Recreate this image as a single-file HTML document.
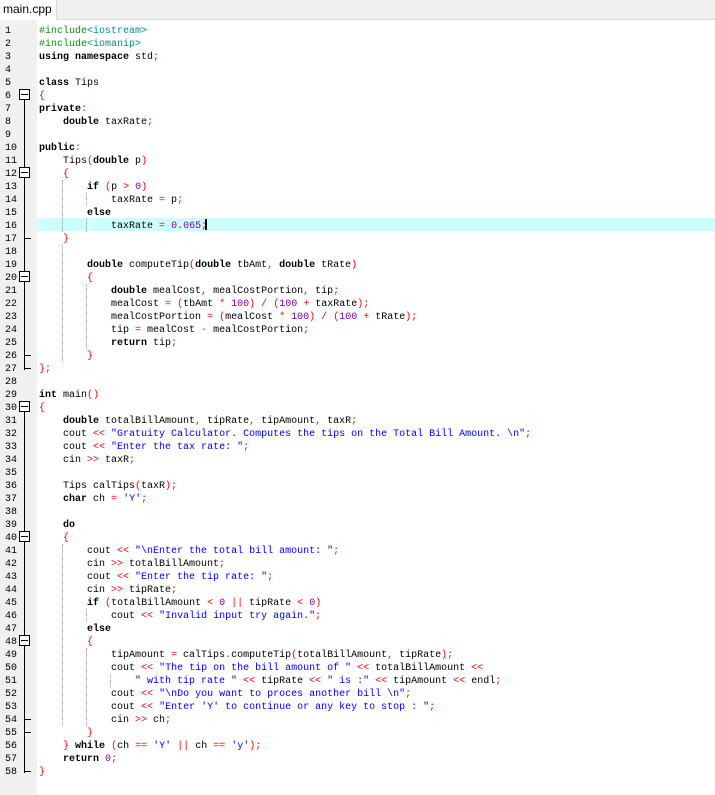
<!DOCTYPE html>
<html><head><meta charset="utf-8"><style>
body{margin:0;width:715px;height:795px;background:#fff;overflow:hidden;position:relative;font-family:"Liberation Mono",monospace;}
#bar{position:absolute;left:0;top:0;width:715px;height:19px;background:#f0f0f0;border-bottom:1px solid #dadada;}
#tab{position:absolute;left:0;top:0;width:57px;height:20px;background:#fff;border-right:1px solid #dadada;font-family:"Liberation Sans",sans-serif;font-size:12px;line-height:19px;padding-left:3px;box-sizing:border-box;color:#000;}
#gut{position:absolute;left:0;top:20px;width:37px;height:775px;background:#f0f0f0;}
#hl{position:absolute;left:37px;top:218px;width:678px;height:13px;background:#ccffff;}
#nums{position:absolute;left:5px;top:25px;font-size:10px;line-height:13px;color:#000;white-space:pre;margin:0;font-family:"Liberation Mono",monospace;}
pre#code{position:absolute;left:39px;top:25px;margin:0;font-family:"Liberation Mono",monospace;font-size:10px;line-height:13px;color:#000;}
.k{font-weight:bold}
.o{color:#f00}
.n{color:#8000a0}
.s{color:#0000ff}
.p{color:#108a10}
.q{color:#00908a}
.box{position:absolute;left:19px;width:11px;height:11px;border:1px solid #000;background:#fff;box-sizing:border-box;}
.box:after{content:"";position:absolute;left:1px;right:1px;top:4px;height:1px;background:#000;}
.vl{position:absolute;left:24px;width:1px;background:#000;}
.tk{position:absolute;left:24px;width:7px;height:1px;background:#000;}
.g{position:absolute;width:0;border-left:1px dotted #999;}
#cur{position:absolute;left:205px;top:219px;width:2px;height:11px;background:#000;}
</style></head><body>
<div id="bar"></div><div id="tab">main.cpp</div>
<div id="gut"></div>
<div id="hl"></div>
<pre id="nums">1
2
3
4
5
6
7
8
9
10
11
12
13
14
15
16
17
18
19
20
21
22
23
24
25
26
27
28
29
30
31
32
33
34
35
36
37
38
39
40
41
42
43
44
45
46
47
48
49
50
51
52
53
54
55
56
57
58</pre>
<div class="vl" style="top:95px;height:275px"></div>
<div class="tk" style="top:238px"></div>
<div class="tk" style="top:355px"></div>
<div class="tk" style="top:368px"></div>
<div class="vl" style="top:407px;height:366px"></div>
<div class="tk" style="top:719px"></div>
<div class="tk" style="top:732px"></div>
<div class="tk" style="top:771px"></div>
<div class="box" style="top:89px"></div>
<div class="box" style="top:167px"></div>
<div class="box" style="top:271px"></div>
<div class="box" style="top:401px"></div>
<div class="box" style="top:531px"></div>
<div class="box" style="top:635px"></div>
<div class="g" style="left:62px;top:180px;height:52px"></div>
<div class="g" style="left:86px;top:193px;height:13px"></div>
<div class="g" style="left:86px;top:219px;height:13px"></div>
<div class="g" style="left:62px;top:245px;height:117px"></div>
<div class="g" style="left:86px;top:284px;height:65px"></div>
<div class="g" style="left:62px;top:544px;height:182px"></div>
<div class="g" style="left:86px;top:609px;height:13px"></div>
<div class="g" style="left:86px;top:648px;height:78px"></div>
<div class="g" style="left:110px;top:674px;height:13px"></div>
<pre id="code"><span class="p">#include</span><span class="q">&lt;iostream&gt;</span>
<span class="p">#include</span><span class="q">&lt;iomanip&gt;</span>
<span class="k">using namespace</span> std<span class="o">;</span>

<span class="k">class</span> Tips
<span class="o">{</span>
<span class="k">private</span><span class="o">:</span>
    <span class="k">double</span> taxRate<span class="o">;</span>

<span class="k">public</span><span class="o">:</span>
    Tips<span class="o">(</span><span class="k">double</span> p<span class="o">)</span>
    <span class="o">{</span>
        <span class="k">if</span> <span class="o">(</span>p <span class="o">&gt;</span> <span class="n">0</span><span class="o">)</span>
            taxRate <span class="o">=</span> p<span class="o">;</span>
        <span class="k">else</span>
            taxRate <span class="o">=</span> <span class="n">0.065</span><span class="o">;</span>
    <span class="o">}</span>

        <span class="k">double</span> computeTip<span class="o">(</span><span class="k">double</span> tbAmt<span class="o">,</span> <span class="k">double</span> tRate<span class="o">)</span>
        <span class="o">{</span>
            <span class="k">double</span> mealCost<span class="o">,</span> mealCostPortion<span class="o">,</span> tip<span class="o">;</span>
            mealCost <span class="o">=</span> <span class="o">(</span>tbAmt <span class="o">*</span> <span class="n">100</span><span class="o">)</span> <span class="o">/</span> <span class="o">(</span><span class="n">100</span> <span class="o">+</span> taxRate<span class="o">);</span>
            mealCostPortion <span class="o">=</span> <span class="o">(</span>mealCost <span class="o">*</span> <span class="n">100</span><span class="o">)</span> <span class="o">/</span> <span class="o">(</span><span class="n">100</span> <span class="o">+</span> tRate<span class="o">);</span>
            tip <span class="o">=</span> mealCost <span class="o">-</span> mealCostPortion<span class="o">;</span>
            <span class="k">return</span> tip<span class="o">;</span>
        <span class="o">}</span>
<span class="o">};</span>

<span class="k">int</span> main<span class="o">()</span>
<span class="o">{</span>
    <span class="k">double</span> totalBillAmount<span class="o">,</span> tipRate<span class="o">,</span> tipAmount<span class="o">,</span> taxR<span class="o">;</span>
    cout <span class="o">&lt;&lt;</span> <span class="s">"Gratuity Calculator. Computes the tips on the Total Bill Amount. \n"</span><span class="o">;</span>
    cout <span class="o">&lt;&lt;</span> <span class="s">"Enter the tax rate: "</span><span class="o">;</span>
    cin <span class="o">&gt;&gt;</span> taxR<span class="o">;</span>

    Tips calTips<span class="o">(</span>taxR<span class="o">);</span>
    <span class="k">char</span> ch <span class="o">=</span> <span class="s">'Y'</span><span class="o">;</span>

    <span class="k">do</span>
    <span class="o">{</span>
        cout <span class="o">&lt;&lt;</span> <span class="s">"\nEnter the total bill amount: "</span><span class="o">;</span>
        cin <span class="o">&gt;&gt;</span> totalBillAmount<span class="o">;</span>
        cout <span class="o">&lt;&lt;</span> <span class="s">"Enter the tip rate: "</span><span class="o">;</span>
        cin <span class="o">&gt;&gt;</span> tipRate<span class="o">;</span>
        <span class="k">if</span> <span class="o">(</span>totalBillAmount <span class="o">&lt;</span> <span class="n">0</span> <span class="o">||</span> tipRate <span class="o">&lt;</span> <span class="n">0</span><span class="o">)</span>
            cout <span class="o">&lt;&lt;</span> <span class="s">"Invalid input try again."</span><span class="o">;</span>
        <span class="k">else</span>
        <span class="o">{</span>
            tipAmount <span class="o">=</span> calTips<span class="o">.</span>computeTip<span class="o">(</span>totalBillAmount<span class="o">,</span> tipRate<span class="o">);</span>
            cout <span class="o">&lt;&lt;</span> <span class="s">"The tip on the bill amount of "</span> <span class="o">&lt;&lt;</span> totalBillAmount <span class="o">&lt;&lt;</span>
                <span class="s">" with tip rate "</span> <span class="o">&lt;&lt;</span> tipRate <span class="o">&lt;&lt;</span> <span class="s">" is :"</span> <span class="o">&lt;&lt;</span> tipAmount <span class="o">&lt;&lt;</span> endl<span class="o">;</span>
            cout <span class="o">&lt;&lt;</span> <span class="s">"\nDo you want to proces another bill \n"</span><span class="o">;</span>
            cout <span class="o">&lt;&lt;</span> <span class="s">"Enter 'Y' to continue or any key to stop : "</span><span class="o">;</span>
            cin <span class="o">&gt;&gt;</span> ch<span class="o">;</span>
        <span class="o">}</span>
    <span class="o">}</span> <span class="k">while</span> <span class="o">(</span>ch <span class="o">==</span> <span class="s">'Y'</span> <span class="o">||</span> ch <span class="o">==</span> <span class="s">'y'</span><span class="o">);</span>
    <span class="k">return</span> <span class="n">0</span><span class="o">;</span>
<span class="o">}</span></pre>
<div id="cur"></div>
</body></html>
